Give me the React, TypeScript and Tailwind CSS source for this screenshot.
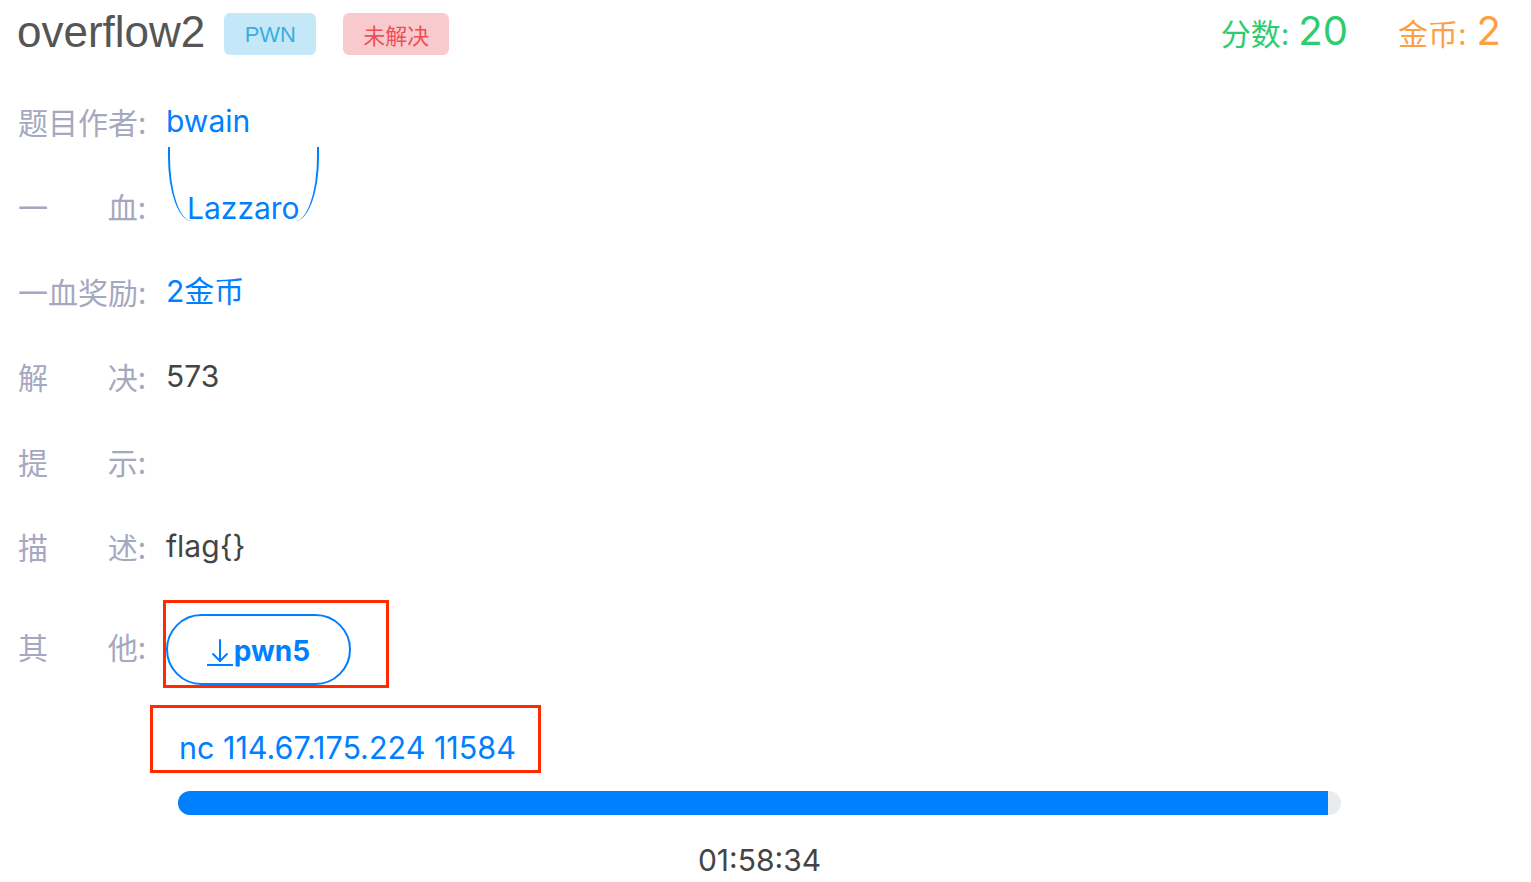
import type { ReactNode } from "react";

const labelCls =
  "w-[128px] flex justify-between whitespace-nowrap text-[30px] leading-[40px] text-[#a5a8bf] font-['Noto_Sans_CJK_SC',sans-serif]";

function Label({ parts }: { parts: string[] }) {
  return (
    <div className={labelCls}>
      {parts.map((p) => (
        <span key={p}>{p}</span>
      ))}
    </div>
  );
}

function Row({ parts, children }: { parts: string[]; children?: ReactNode }) {
  return (
    <div className="flex items-center h-[85px]">
      <Label parts={parts} />
      <div className="ml-[20px] text-[30px] leading-[40px]">{children}</div>
    </div>
  );
}

export default function App() {
  return (
    <div className="w-full h-[882px] bg-white overflow-hidden font-[Inter,'Noto_Sans_CJK_SC',sans-serif]">
      {/* 标题栏 */}
      <header className="flex items-center justify-between h-[68px] pl-[17px] pr-[30px]">
        <div className="flex items-center">
          <h1 className="mb-[5px] text-[44px] leading-none text-[#555] font-['Liberation_Sans','Noto_Sans_CJK_SC',sans-serif]">
            overflow2
          </h1>
          <span className="ml-[19px] w-[92px] h-[42px] rounded-[6px] bg-[#c4e8f8] text-[#3aaee0] text-[22px] flex items-center justify-center font-['Liberation_Sans',sans-serif]">
            PWN
          </span>
          <span className="ml-[27px] w-[106px] h-[42px] rounded-[6px] bg-[#f9cacd] text-[#ec4f55] text-[22px] flex items-center justify-center font-['Noto_Sans_CJK_SC',sans-serif]">
            未解决
          </span>
        </div>
        <div className="mb-[6px] flex items-baseline">
          <span className="text-[30px] text-[#2ecc71]">分数:</span>
          <span className="ml-[9px] text-[40px] text-[#2ecc71]">20</span>
          <span className="ml-[50px] text-[30px] text-[#ff9f43]">金币:</span>
          <span className="ml-[10px] text-[40px] text-[#ff9f43]">2</span>
        </div>
      </header>

      {/* 题目信息 */}
      <div className="mt-[10px] pl-[18px]">
        <Row parts={["题目作者:"]}>
          <span className="text-[#0080ff]">bwain</span>
        </Row>
        <div className="flex items-center h-[85px]">
          <Label parts={["一", "血:"]} />
          <span className="ml-[22px] self-start -mt-[16px] h-[74px] px-[17px] inline-flex items-end border-x-[2.5px] border-[#0080ff] rounded-bl-[24px_64px] rounded-br-[24px_64px]">
            <span className="text-[30px] leading-[30px] -mb-[2px] text-[#0080ff]">Lazzaro</span>
          </span>
        </div>
        <Row parts={["一血奖励:"]}>
          <span className="text-[#0080ff]">2金币</span>
        </Row>
        <Row parts={["解", "决:"]}>
          <span className="text-[#444]">573</span>
        </Row>
        <Row parts={["提", "示:"]} />
        <Row parts={["描", "述:"]}>
          <span className="text-[#444]">flag{"{}"}</span>
        </Row>

        {/* 其他 */}
        <div className="flex items-start h-[100px] pt-[12px]">
          <div className="mt-[26px]">
            <Label parts={["其", "他:"]} />
          </div>
          <div className="ml-[17px] w-[226px] h-[88px] border-[3px] border-[#ff2a00] pt-[11px]">
            <a className="w-[185px] h-[71px] rounded-full border-2 border-[#0080ff] flex items-center justify-center text-[#0080ff] font-bold text-[28px]">
              <span className="border-b-2 border-[#0080ff] px-[3px] pb-[1px] mt-[6px]">
                <svg width="20" height="24" viewBox="0 0 20 24" fill="none" stroke="#0080ff" strokeWidth="2" strokeLinecap="round" strokeLinejoin="round">
                  <path d="M10 1v21" />
                  <path d="M3 15l7 7 7-7" />
                </svg>
              </span>
              <span className="ml-[1px] mt-[2px] leading-none">pwn5</span>
            </a>
          </div>
        </div>

        <div className="mt-[17px] ml-[132px] w-[391px] h-[68px] border-[3px] border-[#ff2a00] pt-[25px] pl-[26px]">
          <span className="block text-[30.5px] leading-[30px] text-[#0080ff]">nc 114.67.175.224 11584</span>
        </div>
      </div>

      {/* 倒计时 */}
      <div className="mt-[18px] ml-[178px] w-[1163px]">
        <div className="h-[24px] rounded-full bg-[#e9ecef] overflow-hidden">
          <div className="h-full w-[98.9%] bg-[#0080ff]" />
        </div>
        <div className="mt-[30px] text-center text-[30px] leading-[30px] text-[#444]">01:58:34</div>
      </div>
    </div>
  );
}
